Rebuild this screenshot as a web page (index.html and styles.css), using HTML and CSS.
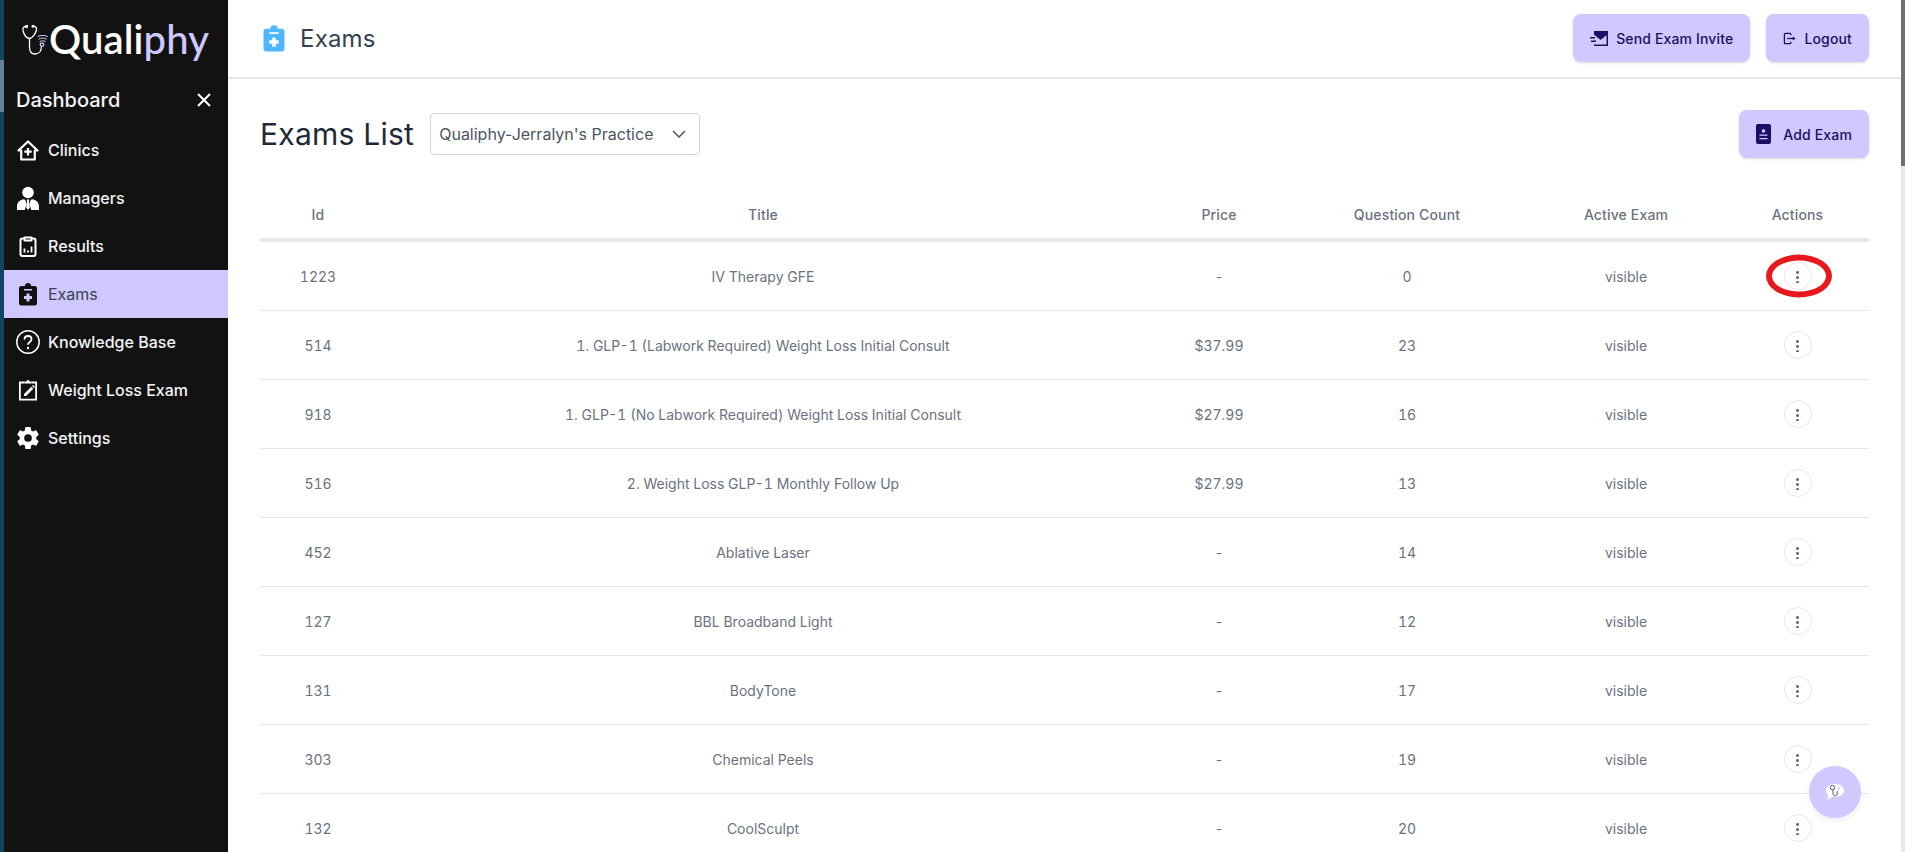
FILE: index.html
```html
<!DOCTYPE html>
<html lang="en">
<head>
<meta charset="utf-8">
<title>Exams</title>
<link rel="stylesheet" href="styles.css">
</head>
<body>
<div class="edge"><div class="edge-light"></div></div>
<aside class="sidebar">
  <div class="logo">
    <svg class="logo-mark" viewBox="0 0 28 32" fill="none" stroke="#fff" stroke-width="1.3" stroke-linecap="round">
      <path d="M5 2.500C2.500 2.500 1.500 4 2 6.500C2.800 10 5 14 8.500 14.500C12 14 14.800 9 15.400 6C15.800 4 15 2.500 12.500 2.200"/>
      <circle cx="5.600" cy="2.400" r=".9" fill="#fff"/><circle cx="12" cy="2.200" r=".9" fill="#fff"/>
      <path d="M8.500 14.500V23C8.500 28 11 30 14 30C18 30 20.500 27 20.500 22.500"/>
      <circle cx="21" cy="20.600" r="1.800" stroke="#cfc8ff"/>
      <g stroke="#cfc8ff" stroke-width="1"><path d="M17 12.500C19.500 11 23.500 11 26.500 12.500"/><path d="M18 15C20 13.800 23 13.800 25.500 15"/><path d="M19 17.400C20.500 16.500 22.500 16.500 24.400 17.400"/></g>
    </svg>
    <span class="logo-text">Quali<span class="logo-accent">phy</span></span>
  </div>
  <div class="dash-row">
    <span class="dash-title">Dashboard</span>
    <svg class="dash-close" viewBox="0 0 14 14" fill="none" stroke="#fff" stroke-width="2"><path d="M1 1l12 12M13 1L1 13"/></svg>
  </div>
  <nav class="nav">
    <a class="nav-item">
      <svg class="nav-icon" viewBox="0 0 24 24" fill="none" stroke="currentColor" stroke-width="2.200" stroke-linejoin="round"><path d="M2.500 12.500L12 3.500l9.500 9H18.800V21.500H5.200V12.500z"/><path d="M12 10v7.500M8.300 13.700h7.400"/></svg>
      <span>Clinics</span>
    </a>
    <a class="nav-item">
      <svg class="nav-icon" viewBox="0 0 24 24" fill="currentColor"><circle cx="12" cy="6.500" r="5.800"/><path d="M8 13.200C3.800 13.800 1 16.500 1 20.300V24h7.800l1.700-6-1-3.800zM16 13.200C20.200 13.800 23 16.500 23 20.300V24h-7.800l-1.700-6 1-3.800zM10.600 13.500h2.800l-.5 2 1 6-1.900 2.500-1.900-2.500 1-6z"/></svg>
      <span>Managers</span>
    </a>
    <a class="nav-item">
      <svg class="nav-icon" viewBox="0 0 24 24" fill="none" stroke="currentColor" stroke-width="2" stroke-linejoin="round"><path d="M8.500 4.500H6.500a2 2 0 0 0-2 2V20a2 2 0 0 0 2 2h11a2 2 0 0 0 2-2V6.500a2 2 0 0 0-2-2h-2"/><path d="M8.500 3.500h7v3h-7z"/><path d="M8.500 18.500v-4M12 18.500v-2M15.500 18.500v-6" stroke-width="1.800"/></svg>
      <span>Results</span>
    </a>
    <a class="nav-item active">
      <svg class="nav-icon" viewBox="0 0 24 24"><path fill="#111" d="M5.500 4H9V3.200C9 2 10.300 1 12 1s3 1 3 2.200V4h3.500A2.500 2.500 0 0 1 21 6.500V21a2.500 2.500 0 0 1-2.500 2.500h-13A2.500 2.500 0 0 1 3 21V6.500A2.500 2.500 0 0 1 5.500 4z"/><path fill="#cfc8ff" d="M8 7h8v1.600H8zM10.500 11.500h3V14H16v3h-2.500v2.500h-3V17H8v-3h2.500z"/></svg>
      <span>Exams</span>
    </a>
    <a class="nav-item">
      <svg class="nav-icon" viewBox="0 0 24 24" fill="none" stroke="currentColor" stroke-width="1.500"><circle cx="12" cy="12" r="11.200"/><path d="M8.500 9.500C8.500 7.300 10 6 12 6s3.500 1.300 3.500 3.200c0 2.800-3.500 2.800-3.500 5.600" stroke-width="1.800"/><circle cx="12" cy="18" r="1.200" fill="currentColor" stroke="none"/></svg>
      <span>Knowledge Base</span>
    </a>
    <a class="nav-item">
      <svg class="nav-icon" viewBox="0 0 24 24"><path fill="none" stroke="currentColor" stroke-width="1.800" d="M8.500 4.500H3.900v17.200h16.200V4.500h-4.600"/><path fill="currentColor" d="M8.500 5.500V3.500h2c.3-1 .8-1.500 1.500-1.500s1.200.5 1.500 1.500h2v2zM15.300 8.800l2 2-7.200 7.200H8v-2.100zM16 8.100l1-1 2 2-1 1z"/></svg>
      <span>Weight Loss Exam</span>
    </a>
    <a class="nav-item">
      <svg class="nav-icon" viewBox="0 0 24 24" fill="currentColor"><path transform="translate(-1.200 -1.200) scale(1.100)" fill-rule="evenodd" d="M12,15.500A3.500,3.500 0 0,1 8.500,12A3.500,3.500 0 0,1 12,8.500A3.500,3.500 0 0,1 15.500,12A3.500,3.500 0 0,1 12,15.500M19.430,12.970C19.470,12.650 19.500,12.330 19.500,12C19.500,11.670 19.470,11.340 19.430,11L21.540,9.370C21.730,9.220 21.780,8.950 21.660,8.730L19.660,5.270C19.540,5.050 19.270,4.960 19.050,5.050L16.560,6.050C16.040,5.660 15.500,5.320 14.870,5.070L14.500,2.420C14.460,2.180 14.250,2 14,2H10C9.750,2 9.540,2.180 9.500,2.420L9.130,5.070C8.500,5.320 7.960,5.660 7.440,6.050L4.950,5.050C4.730,4.960 4.460,5.050 4.340,5.270L2.340,8.730C2.210,8.950 2.270,9.220 2.460,9.370L4.570,11C4.530,11.340 4.500,11.670 4.500,12C4.500,12.330 4.530,12.650 4.570,12.970L2.460,14.630C2.270,14.780 2.210,15.050 2.340,15.270L4.340,18.730C4.460,18.950 4.730,19.030 4.950,18.950L7.440,17.940C7.960,18.340 8.500,18.680 9.130,18.930L9.500,21.580C9.540,21.820 9.750,22 10,22H14C14.250,22 14.460,21.820 14.500,21.580L14.870,18.930C15.500,18.670 16.040,18.340 16.560,17.940L19.050,18.950C19.270,19.030 19.540,18.950 19.660,18.730L21.660,15.270C21.780,15.050 21.730,14.780 21.540,14.630L19.430,12.970Z"/></svg>
      <span>Settings</span>
    </a>
  </nav>
</aside>
<main class="main">
  <header class="topbar">
    <div class="page-title">
      <svg class="title-icon" viewBox="0 0 24 24"><path fill="#4db8ff" d="M5.500 4H9V3.200C9 2 10.300 1 12 1s3 1 3 2.200V4h3.500A2.500 2.500 0 0 1 21 6.500V21a2.500 2.500 0 0 1-2.500 2.500h-13A2.500 2.500 0 0 1 3 21V6.500A2.500 2.500 0 0 1 5.500 4z"/><path fill="#fff" d="M8 7h8v1.600H8zM10.500 11.500h3V14H16v3h-2.500v2.500h-3V17H8v-3h2.500z"/></svg>
      <span>Exams</span>
    </div>
    <div class="top-actions">
      <button class="btn">
        <svg class="btn-icon-send" viewBox="0 0 18 15" fill="#1c0c66"><path d="M4 0h14v3l-7.500 6L4 3.500z"/><path d="M16.500 3H18v12H4v-1.600h12.500zM0 6h5v1.500H0zM1 9.500h5V11H1z"/></svg>
        <span>Send Exam Invite</span>
      </button>
      <button class="btn">
        <svg class="btn-icon-logout" viewBox="0 0 14 14" fill="none" stroke="#1c0c66" stroke-width="1.400"><path d="M8.500 3.500V2.700A1.300 1.300 0 0 0 7.200 1.400H2.800A1.300 1.300 0 0 0 1.500 2.700v8.600a1.300 1.300 0 0 0 1.300 1.300h4.400a1.300 1.300 0 0 0 1.300-1.300v-.8"/><path d="M4.500 7H11"/><path d="M10.500 4.800L13.500 7l-3 2.200z" fill="#1c0c66" stroke="none"/></svg>
        <span>Logout</span>
      </button>
    </div>
  </header>
  <section class="content">
    <div class="list-head">
      <h1 class="list-title">Exams List</h1>
      <div class="select">
        <span>Qualiphy-Jerralyn's Practice</span>
        <svg class="chevron" viewBox="0 0 14 8" fill="none" stroke="#4b5563" stroke-width="1.500"><path d="M1 1l6 6 6-6"/></svg>
      </div>
      <button class="btn btn-add">
        <svg class="btn-icon-add" viewBox="0 0 15 20"><rect width="15" height="20" rx="2" fill="#1c0c66"/><circle cx="7.500" cy="7" r="1.800" fill="#d0c9ff"/><path d="M3.500 10.500h8v1.200h-8zM3.500 14h8v1.200h-8z" fill="#d0c9ff"/></svg>
        <span>Add Exam</span>
      </button>
    </div>
    <table class="exams">
      <colgroup>
        <col class="c-id"><col class="c-title"><col class="c-price"><col class="c-count"><col class="c-active"><col class="c-actions">
      </colgroup>
      <thead>
        <tr><th>Id</th><th>Title</th><th>Price</th><th>Question Count</th><th>Active Exam</th><th>Actions</th></tr>
      </thead>
      <tbody>
        <tr><td>1223</td><td>IV Therapy GFE</td><td>-</td><td>0</td><td>visible</td><td><div class="act-wrap"><button class="more"><span class="dots"></span></button><span class="ring"></span></div></td></tr>
        <tr><td>514</td><td>1. GLP-1 (Labwork Required) Weight Loss Initial Consult</td><td>$37.99</td><td>23</td><td>visible</td><td><div class="act-wrap"><button class="more"><span class="dots"></span></button></div></td></tr>
        <tr><td>918</td><td>1. GLP-1 (No Labwork Required) Weight Loss Initial Consult</td><td>$27.99</td><td>16</td><td>visible</td><td><div class="act-wrap"><button class="more"><span class="dots"></span></button></div></td></tr>
        <tr><td>516</td><td>2. Weight Loss GLP-1 Monthly Follow Up</td><td>$27.99</td><td>13</td><td>visible</td><td><div class="act-wrap"><button class="more"><span class="dots"></span></button></div></td></tr>
        <tr><td>452</td><td>Ablative Laser</td><td>-</td><td>14</td><td>visible</td><td><div class="act-wrap"><button class="more"><span class="dots"></span></button></div></td></tr>
        <tr><td>127</td><td>BBL Broadband Light</td><td>-</td><td>12</td><td>visible</td><td><div class="act-wrap"><button class="more"><span class="dots"></span></button></div></td></tr>
        <tr><td>131</td><td>BodyTone</td><td>-</td><td>17</td><td>visible</td><td><div class="act-wrap"><button class="more"><span class="dots"></span></button></div></td></tr>
        <tr><td>303</td><td>Chemical Peels</td><td>-</td><td>19</td><td>visible</td><td><div class="act-wrap"><button class="more"><span class="dots"></span></button></div></td></tr>
        <tr><td>132</td><td>CoolSculpt</td><td>-</td><td>20</td><td>visible</td><td><div class="act-wrap"><button class="more"><span class="dots"></span></button></div></td></tr>
      </tbody>
    </table>
  </section>
  <button class="chat">
    <svg class="chat-icon" viewBox="0 0 20 18"><path fill="#fff" d="M10 1c5 0 9 2.700 9 6.500S15 14 10 14c-1 0-2-.1-2.800-.4C5.500 15.500 3.500 16.500 1 16.500c1.400-1 2.300-2.200 2.600-3.700C2 11.500 1 9.700 1 7.500 1 3.700 5 1 10 1z"/><g fill="none" stroke="#55507a" stroke-width="1"><circle cx="7.500" cy="4.600" r="2.200"/><path d="M8 6.800v3.400c0 1.800 1 2.600 2.200 2.600s2-1 2-2.800V8"/></g><path d="M12.500 4.500h3L13.500 8z" fill="#cfc8ff"/></svg>
  </button>
</main>
<div class="scroll"><div class="scroll-thumb"></div></div>
</body>
</html>
```

FILE: styles.css
```css
* { box-sizing: border-box; }
html, body { height: 100%; }
body {
  margin: 0;
  display: flex;
  height: 100vh;
  overflow: hidden;
  background: #fff;
  font-family: Inter, "Liberation Sans", sans-serif;
  color: #374151;
}
.edge { width: 4px; flex: none; background: #0f4560; padding-top: 60px; }
.edge-light { height: 52px; background: #628294; }

.sidebar { width: 224px; flex: none; background: #121212; color: #fff; }
.logo { height: 76px; display: flex; align-items: flex-start; padding: 20px 0 0 17px; }
.logo-mark { width: 28px; height: 32px; flex: none; margin-top: 4px; }
.logo-text { font-family: Lato, sans-serif; font-weight: 600; font-size: 40px; line-height: 38px; letter-spacing: .1px; }
.logo-accent { color: #cfc8ff; font-weight: 500; }
.dash-row { height: 50px; display: flex; align-items: center; justify-content: space-between; padding: 0 17px 2px 12px; }
.dash-title { font-size: 20px; font-weight: 500; color: #f3f4f6; }
.dash-close { width: 14px; height: 14px; }
.nav { display: flex; flex-direction: column; }
.nav-item { height: 48px; display: flex; align-items: center; gap: 8px; padding-left: 12px; font-size: 16px; font-weight: 500; color: #f3f4f6; }
.nav-item.active { background: #cfc8ff; color: #374151; font-weight: 400; }
.nav-icon { width: 24px; height: 24px; flex: none; color: #fff; }

.main { flex: 1; min-width: 0; position: relative; overflow: hidden; }
.topbar { height: 79px; border-bottom: 2px solid #e5e5e5; display: flex; align-items: center; justify-content: space-between; padding: 0 32px 1px; }
.page-title { display: flex; align-items: center; gap: 12px; font-size: 24px; letter-spacing: .2px; color: #374151; }
.title-icon { width: 28px; height: 28px; flex: none; }
.top-actions { display: flex; gap: 16px; }
.btn {
  height: 48px; display: inline-flex; align-items: center; gap: 8px; padding: 0 17px;
  border: 0; border-radius: 8px; background: #d0c9ff; color: #1c0c66;
  font: 500 14px Inter, sans-serif; letter-spacing: .15px; box-shadow: 0 1px 3px rgba(0,0,0,.14);
}
.btn-icon-send { width: 18px; height: 15px; }
.btn-icon-logout { width: 13px; height: 13px; }
.btn-icon-add { width: 15px; height: 20px; margin-right: 2px; }

.content { padding: 31px 32px 0; }
.list-head { display: flex; align-items: center; height: 48px; }
.list-title { margin: 0; font-size: 30px; font-weight: 400; letter-spacing: .25px; color: #1f2937; }
.select {
  margin-left: 16px; width: 270px; height: 42px; display: flex; align-items: center; justify-content: space-between;
  padding: 0 13px 0 8px; border: 1px solid #d1d5db; border-radius: 4px; font-size: 16px; color: #4b5563;
}
.chevron { width: 14px; height: 8px; }
.btn-add { margin-left: auto; gap: 10px; }

.exams { width: 100%; margin-top: 32px; border-collapse: separate; border-spacing: 0; table-layout: fixed; font-size: 14px; color: #6b7280; }
.c-id { width: 116px; }
.c-title { width: 774px; }
.c-price { width: 138px; }
.c-count { width: 238px; }
.c-active { width: 200px; }
.c-actions { width: 143px; }
.exams th { height: 52px; padding: 0; font-weight: 500; letter-spacing: .15px; border-bottom: 4px solid #e5e7eb; }
.exams td { height: 69px; padding: 0; text-align: center; font-feature-settings: "tnum"; border-bottom: 1px solid #e5e7eb; }
.act-wrap { position: relative; display: flex; justify-content: center; }
.more { width: 28px; height: 28px; padding: 0; display: flex; align-items: center; justify-content: center; background: #fff; border: 1px solid #e5e7eb; border-radius: 50%; }
.dots { width: 3px; height: 13px; background: radial-gradient(circle, #6b7280 1.3px, transparent 1.6px) 0 0 / 3px 5px repeat-y; }
.ring { position: absolute; left: calc(50% + 1.5px); top: 50%; width: 66px; height: 43px; transform: translate(-50%, -50%); border: 6px solid #e8191c; border-radius: 50%; }

.chat { position: absolute; left: 1581px; top: 766px; width: 52px; height: 52px; padding: 0; border: 0; border-radius: 50%; background: #d0c9ff; display: flex; align-items: center; justify-content: center; box-shadow: 0 2px 6px rgba(0,0,0,.08); }
.chat-icon { width: 20px; height: 18px; }

.scroll { width: 4px; flex: none; background: #e8e8e8; }
.scroll-thumb { height: 166px; background: #6e6e6e; }
```
